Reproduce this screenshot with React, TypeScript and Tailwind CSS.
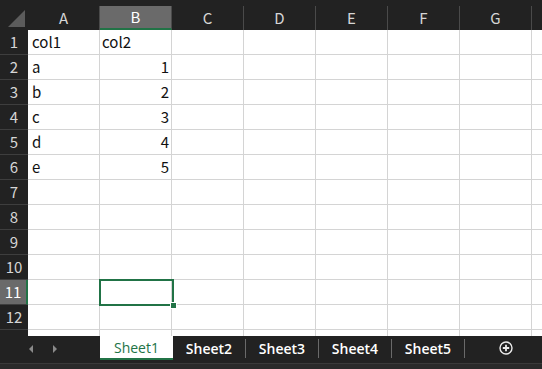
import React from 'react';

const COLS = ['A', 'B', 'C', 'D', 'E', 'F', 'G', 'H'];
const DATA: Record<number, [string, string]> = {
  1: ['col1', 'col2'],
  2: ['a', '1'],
  3: ['b', '2'],
  4: ['c', '3'],
  5: ['d', '4'],
  6: ['e', '5'],
};
const ROWS = Array.from({ length: 13 }, (_, i) => i + 1);
const SHEETS = ['Sheet1', 'Sheet2', 'Sheet3', 'Sheet4', 'Sheet5'];

const cellFont = { fontFamily: '"Noto Sans CJK JP", "Liberation Sans", sans-serif' };

export default function App() {
  return (
    <div className="w-[542px] h-[369px] overflow-hidden bg-[#222222] flex flex-col select-none" style={cellFont}>
      {/* Column headers */}
      <div className="flex h-[30px] shrink-0 bg-[#222222]">
        <div className="w-[28px] shrink-0 relative">
          <div className="absolute left-[8px] top-[10px] w-0 h-0 border-l-[17px] border-l-transparent border-b-[17px] border-b-[#5c5c5c]" />
        </div>
        {COLS.map(c => (
          <div
            key={c}
            className={`w-[72px] shrink-0 mt-[6px] h-[24px] flex items-center justify-center text-[15px] border-r border-[#4a4a4a] ${c === 'B' ? 'bg-[#6a6a6a] text-white border-b-2 border-b-[#217346]' : 'text-[#d6d6d6]'}`}
          >
            {c === 'H' ? '' : c}
          </div>
        ))}
      </div>

      {/* Grid */}
      <div className="h-[306px] shrink-0 overflow-hidden">
        {ROWS.map(r => (
          <div key={r} className="flex h-[25px]">
            <div
              className={`w-[28px] shrink-0 flex items-center justify-center text-[15px] border-b border-[#3e3e3e] ${r === 11 ? 'bg-[#6a6a6a] text-white border-r-2 border-r-[#217346]' : 'text-[#d6d6d6]'}`}
            >
              {r < 13 ? r : ''}
            </div>
            {COLS.map((c, ci) => {
              const v = DATA[r]?.[ci];
              return (
                <div
                  key={c}
                  className={`w-[72px] shrink-0 bg-white border-r border-b border-[#d4d4d4] flex items-center text-[15px] text-[#111] relative ${ci === 1 ? 'justify-end pr-[2px]' : 'pl-[4px]'}`}
                >
                  {v && (ci === 1 && r === 1 ? <span className="mr-auto pl-[2px]">{v}</span> : v)}
                  {r === 11 && c === 'B' && (
                    <>
                      <div className="absolute z-10 left-[-1px] top-[-1px] w-[75px] h-[27px] border-2 border-[#217346]" />
                      <div className="absolute z-20 left-[70px] top-[22px] w-[5px] h-[5px] bg-[#217346] border border-white box-content" />
                    </>
                  )}
                </div>
              );
            })}
          </div>
        ))}
      </div>

      {/* Sheet tabs */}
      <div className="h-[27px] shrink-0 flex bg-[#222222]" style={{ fontFamily: '"Open Sans", "Noto Sans", sans-serif' }}>
        <div className="w-[100px] shrink-0 flex items-center gap-[20px] pl-[29px] pb-[1px]">
          <div className="w-0 h-0 border-y-[4px] border-y-transparent border-r-[4px] border-r-[#8a8a8a]" />
          <div className="w-0 h-0 border-y-[4px] border-y-transparent border-l-[4px] border-l-[#8a8a8a]" />
        </div>
        {SHEETS.map((s, i) =>
          i === 0 ? (
            <div key={s} className="w-[73px] h-[24px] shrink-0 bg-white border-b-[2px] border-[#217346] flex items-center justify-center text-[14px] text-[#217346]">
              {s}
            </div>
          ) : (
            <div key={s} className="w-[73px] h-[24px] shrink-0 flex items-center">
              <div className="flex-1 text-center text-[14px] font-semibold text-white">{s}</div>
              <div className="w-px h-[19px] bg-[#6a6a6a]" />
            </div>
          )
        )}
        <div className="w-[82px] shrink-0 h-[24px] flex items-center justify-center">
          <svg width="14" height="14" viewBox="0 0 14 14" fill="none" stroke="#ececec" strokeWidth="1.4">
            <circle cx="7" cy="7" r="6" />
            <path d="M7 3.8v6.4M3.8 7h6.4" strokeWidth="1.8" />
          </svg>
        </div>
      </div>

      {/* Status strip */}
      <div className="flex-1 bg-[#2a2a2a] border-t border-[#3a3a3a]" />
    </div>
  );
}
